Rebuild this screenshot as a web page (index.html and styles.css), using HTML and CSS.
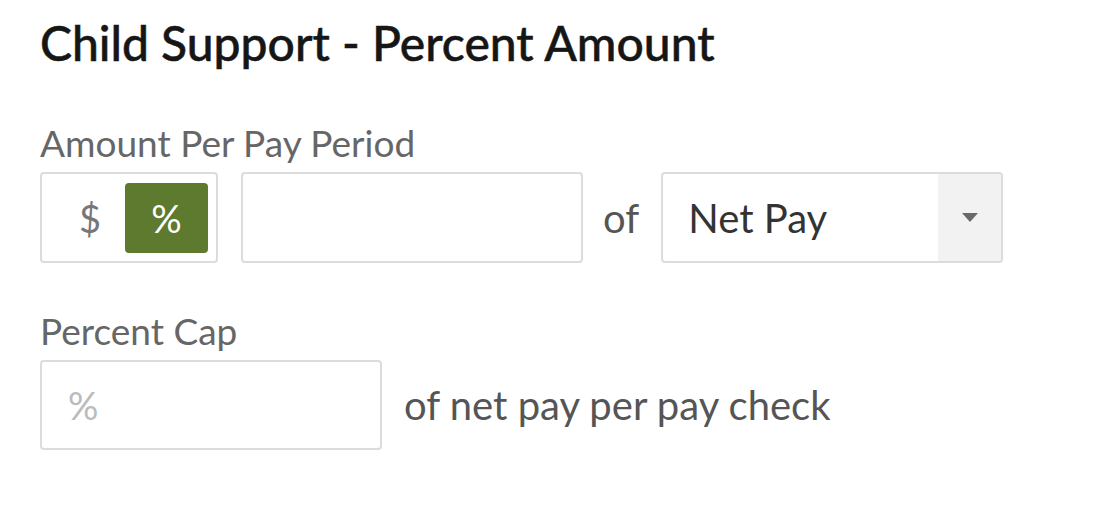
FILE: index.html
```html
<!DOCTYPE html>
<html>
<head>
<meta charset="utf-8">
<link rel="stylesheet" href="styles.css">
</head>
<body>
<div class="page">
  <h1 class="title">Child Support - Percent Amount</h1>
  <div class="field">
    <div class="label">Amount Per Pay Period</div>
    <div class="row">
      <div class="toggle">
        <span class="opt">$</span>
        <span class="opt active">%</span>
      </div>
      <div class="input wide"></div>
      <span class="of">of</span>
      <div class="select">
        <span class="select-text">Net Pay</span>
        <span class="select-arrow">
          <svg width="16" height="9" viewBox="0 0 16 9"><path d="M0 0 L16 0 L8 9 Z" fill="#6a6a6a"/></svg>
        </span>
      </div>
    </div>
  </div>
  <div class="field second">
    <div class="label">Percent Cap</div>
    <div class="row">
      <div class="input cap"><span class="placeholder">%</span></div>
      <span class="suffix">of net pay per pay check</span>
    </div>
  </div>
</div>
</body>
</html>
```
FILE: styles.css
```css
html, body {
  margin: 0;
  padding: 0;
  background: #fff;
}
body {
  font-family: Lato, "Noto Sans", sans-serif;
}
.page {
  padding: 15px 0 0 40px;
}
.title {
  margin: 0;
  font-size: 48px;
  font-weight: 500;
  color: #161616;
  line-height: 56px;
  -webkit-text-stroke: 0.5px #161616;
}
.field {
  margin-top: 50px;
}
.second {
  margin-top: 46px;
}
.label {
  font-size: 37px;
  color: #666;
  line-height: 44px;
}
.row {
  display: flex;
  align-items: center;
  margin-top: 7px;
}
.toggle {
  width: 178px;
  height: 91px;
  box-sizing: border-box;
  border: 2px solid #dcdcdc;
  border-radius: 4px;
  display: flex;
  align-items: center;
  padding: 0 8px 0 24px;
  justify-content: space-between;
}
.opt {
  font-size: 38px;
  color: #777;
  width: 48px;
  text-align: center;
}
.opt.active {
  width: 83px;
  height: 70px;
  background: #5e7a2f;
  color: #fff;
  border-radius: 4px;
  display: flex;
  align-items: center;
  justify-content: center;
}
.input {
  box-sizing: border-box;
  border: 2px solid #dcdcdc;
  border-radius: 4px;
  background: #fff;
}
.wide {
  width: 342px;
  height: 91px;
  margin-left: 23px;
}
.of {
  font-size: 40px;
  color: #555;
  margin: 0 22px 0 20px;
}
.select {
  width: 342px;
  height: 91px;
  box-sizing: border-box;
  border: 2px solid #dcdcdc;
  border-radius: 4px;
  display: flex;
  align-items: stretch;
  overflow: hidden;
}
.select-text {
  flex: 1;
  display: flex;
  align-items: center;
  padding-left: 25px;
  font-size: 40px;
  color: #333;
}
.select-arrow {
  width: 63px;
  background: #f2f2f2;
  display: flex;
  align-items: center;
  justify-content: center;
}
.cap {
  width: 342px;
  height: 90px;
  display: flex;
  align-items: center;
  padding-left: 26px;
}
.placeholder {
  font-size: 38px;
  color: #bbb;
}
.suffix {
  font-size: 40px;
  color: #555;
  margin-left: 22px;
}
```
